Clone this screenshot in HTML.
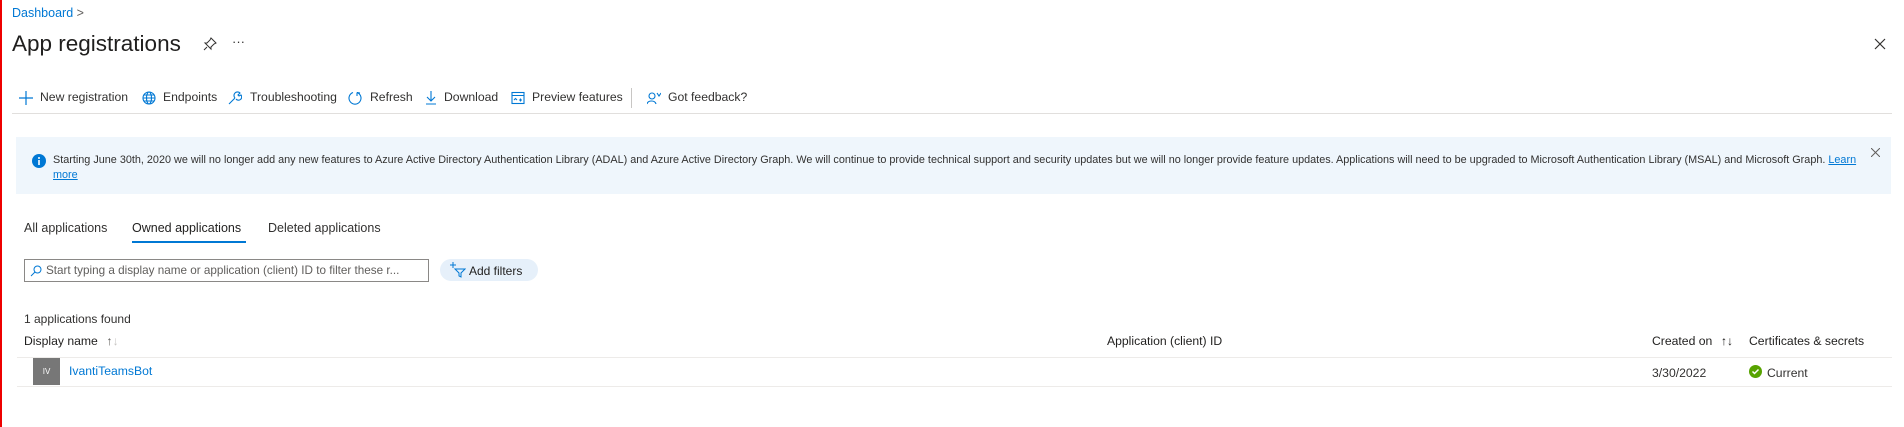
<!DOCTYPE html>
<html><head><meta charset="utf-8"><style>
*{margin:0;padding:0;box-sizing:border-box}
body{width:1904px;height:427px;background:#fff;font-family:"Liberation Sans",sans-serif;color:#323130;position:relative;overflow:hidden;font-size:13px}
.a{position:absolute;white-space:nowrap}
.redl{position:absolute;left:0;top:0;width:2px;height:427px;background:#e00}
.t{position:absolute;top:90px;font-size:12.2px;white-space:nowrap}
.i{position:absolute;top:91px}
</style></head><body>
<div class="redl"></div>
<div class="a" style="left:12px;top:6px;font-size:12.5px;color:#0078d4">Dashboard <span style="color:#605e5c">&gt;</span></div>
<div class="a" style="left:12px;top:31px;font-size:22.5px;color:#201f1e">App registrations</div>
<svg class="a" style="left:203px;top:37px" width="14" height="14" viewBox="0 0 14 14" fill="none" stroke="#323130" stroke-width="1"><path d="M8 1l5 5-2 1-3 3 0 2-6-6 2 0 3-3z M4 10l-3 3"/></svg>
<div class="a" style="left:232px;top:34px;font-size:13px">···</div>
<svg class="a" style="left:1874px;top:38px" width="12" height="12" viewBox="0 0 12 12" stroke="#323130" stroke-width="1.2"><path d="M1 1l10 10M11 1L1 11"/></svg>

<svg class="i" style="left:19px" width="14" height="14" viewBox="0 0 14 14" stroke="#0078d4" stroke-width="1.2"><path d="M7 0v14M0 7h14"/></svg>
<div class="t" style="left:40px">New registration</div>
<svg class="i" style="left:142px" width="14" height="14" viewBox="0 0 14 14" fill="none" stroke="#0078d4" stroke-width="1.1"><circle cx="7" cy="7" r="6"/><ellipse cx="7" cy="7" rx="2.5" ry="6"/><path d="M1 7h12M2 4h10M2 10h10"/></svg>
<div class="t" style="left:163px">Endpoints</div>
<svg class="i" style="left:228px" width="14" height="14" viewBox="0 0 14 14" fill="none" stroke="#0078d4" stroke-width="1.1"><path d="M1 13l6-6 M7 7a3 3 0 1 1 5-5l-2 2 1 1 2-1a3 3 0 0 1-5 4"/></svg>
<div class="t" style="left:250px">Troubleshooting</div>
<svg class="i" style="left:348px" width="14" height="14" viewBox="0 0 14 14" fill="none" stroke="#0078d4" stroke-width="1.1"><path d="M5 1.5A6 6 0 1 0 9 1.5M9 1.5L9 5M9 1.5L12 2"/></svg>
<div class="t" style="left:370px">Refresh</div>
<svg class="i" style="left:424px" width="14" height="14" viewBox="0 0 14 14" fill="none" stroke="#0078d4" stroke-width="1.1"><path d="M7 0v10M3 6l4 4 4-4M2 13h10"/></svg>
<div class="t" style="left:444px">Download</div>
<svg class="i" style="left:511px" width="14" height="14" viewBox="0 0 14 14" fill="none" stroke="#0078d4" stroke-width="1.1"><rect x="1" y="1.5" width="12" height="11"/><path d="M1 4.5h12M3 9l1.5-1.5L6 9M8 9h3M9.5 7.5v3"/></svg>
<div class="t" style="left:532px">Preview features</div>
<div class="a" style="left:631px;top:88px;width:1px;height:20px;background:#c8c6c4"></div>
<svg class="i" style="left:647px" width="14" height="14" viewBox="0 0 14 14" fill="none" stroke="#0078d4" stroke-width="1.1"><circle cx="5" cy="5" r="3"/><path d="M0 13c1-4 8-4 9 0M10 2l2 3 2-3"/></svg>
<div class="t" style="left:668px">Got feedback?</div>

<div class="a" style="left:12px;top:113px;width:1880px;height:1px;background:#e1dfdd"></div>
<div class="a" style="left:16px;top:137px;width:1875px;height:57px;background:#eff6fc"></div>
<svg class="a" style="left:32px;top:154px" width="14" height="14" viewBox="0 0 14 14"><circle cx="7" cy="7" r="7" fill="#0078d4"/><rect x="6.2" y="6" width="1.6" height="5" fill="#fff"/><circle cx="7" cy="4" r="1" fill="#fff"/></svg>
<div class="a" style="left:53px;top:153px;font-size:10.83px;line-height:15px;color:#323130">Starting June 30th, 2020 we will no longer add any new features to Azure Active Directory Authentication Library (ADAL) and Azure Active Directory Graph. We will continue to provide technical support and security updates but we will no longer provide feature updates. Applications will need to be upgraded to Microsoft Authentication Library (MSAL) and Microsoft Graph. <u style="color:#0078d4">Learn</u><br><u style="color:#0078d4">more</u></div>
<svg class="a" style="left:1871px;top:148px" width="9" height="9" viewBox="0 0 9 9" stroke="#605e5c" stroke-width="1"><path d="M0 0l9 9M9 0L0 9"/></svg>

<div class="a" style="left:24px;top:221px;font-size:12.5px">All applications</div>
<div class="a" style="left:132px;top:221px;font-size:12.5px;color:#201f1e">Owned applications</div>
<div class="a" style="left:132px;top:241px;width:114px;height:2px;background:#0078d4"></div>
<div class="a" style="left:268px;top:221px;font-size:12.5px">Deleted applications</div>

<div class="a" style="left:24px;top:259px;width:405px;height:23px;border:1px solid #8a8886"></div>
<svg class="a" style="left:30px;top:265px" width="12" height="12" viewBox="0 0 12 12" fill="none" stroke="#0078d4" stroke-width="1"><circle cx="7.5" cy="4.5" r="3.5"/><path d="M5 7l-4 4"/></svg>
<div class="a" style="left:46px;top:264px;font-size:11.7px;color:#605e5c">Start typing a display name or application (client) ID to filter these r...</div>
<div class="a" style="left:440px;top:259px;width:98px;height:22px;border-radius:11px;background:#e6f0fa"></div>
<svg class="a" style="left:450px;top:262px" width="16" height="16" viewBox="0 0 16 16" fill="none" stroke="#0078d4" stroke-width="1"><path d="M3 0v6M0 3h6M5 7h10l-4 4v4l-2-1v-3z"/></svg>
<div class="a" style="left:469px;top:264px;font-size:12px;color:#201f1e">Add filters</div>

<div class="a" style="left:24px;top:312px;font-size:12px">1 applications found</div>
<div class="a" style="left:24px;top:334px;font-size:12.2px;color:#201f1e">Display name <span style="color:#605e5c;margin-left:5px">↑<span style="color:#c8c6c4">↓</span></span></div>
<div class="a" style="left:1107px;top:334px;font-size:12.2px;color:#201f1e">Application (client) ID</div>
<div class="a" style="left:1652px;top:334px;font-size:12.2px;color:#201f1e">Created on <span style="margin-left:5px">↑↓</span></div>
<div class="a" style="left:1749px;top:334px;font-size:12.2px;color:#201f1e">Certificates &amp; secrets</div>
<div class="a" style="left:17px;top:357px;width:1875px;height:1px;background:#edebe9"></div>
<div class="a" style="left:33px;top:358px;width:27px;height:27px;background:#777;color:#fff;font-size:8px;text-align:center;line-height:27px">IV</div>
<div class="a" style="left:69px;top:364px;font-size:12.2px;color:#0078d4">IvantiTeamsBot</div>
<div class="a" style="left:1652px;top:366px;font-size:12.2px">3/30/2022</div>
<svg class="a" style="left:1749px;top:365px" width="13" height="13" viewBox="0 0 13 13"><circle cx="6.5" cy="6.5" r="6.5" fill="#57a300"/><path d="M3.5 6.5l2 2 4-4" stroke="#fff" stroke-width="1.5" fill="none"/></svg>
<div class="a" style="left:1767px;top:366px;font-size:12.2px">Current</div>
<div class="a" style="left:17px;top:386px;width:1875px;height:1px;background:#edebe9"></div>
</body></html>
